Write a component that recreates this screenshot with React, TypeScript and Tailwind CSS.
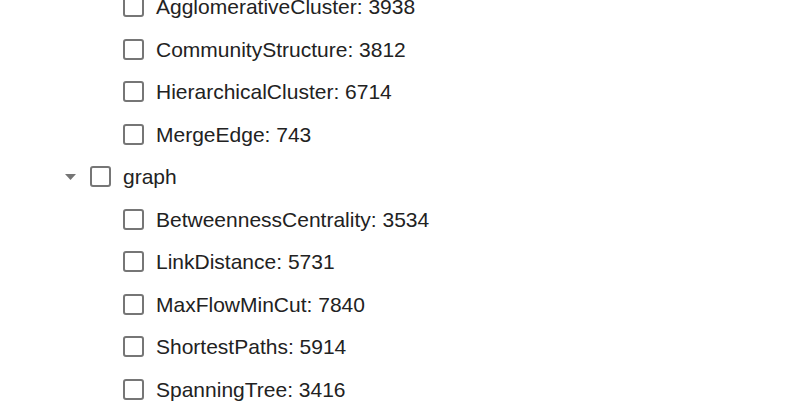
type Node = { label: string; count?: number; depth: number; open?: boolean };

const ROWS: Node[] = [
  { label: "AgglomerativeCluster", count: 3938, depth: 2 },
  { label: "CommunityStructure", count: 3812, depth: 2 },
  { label: "HierarchicalCluster", count: 6714, depth: 2 },
  { label: "MergeEdge", count: 743, depth: 2 },
  { label: "graph", depth: 1, open: true },
  { label: "BetweennessCentrality", count: 3534, depth: 2 },
  { label: "LinkDistance", count: 5731, depth: 2 },
  { label: "MaxFlowMinCut", count: 7840, depth: 2 },
  { label: "ShortestPaths", count: 5914, depth: 2 },
  { label: "SpanningTree", count: 3416, depth: 2 },
];

function Caret() {
  return (
    <svg width="11" height="6" viewBox="0 0 11 6">
      <path d="M0 0 L11 0 L5.5 6 Z" fill="#757575" />
    </svg>
  );
}

function Row({ node }: { node: Node }) {
  return (
    <div className="flex items-center h-[42.5px]">
      {/* indent + caret slot */}
      <div className={node.depth === 1 ? "w-[65px] shrink-0" : "w-[98px] shrink-0"} />
      <div className="w-[25px] shrink-0 flex items-center">
        {node.open && <Caret />}
      </div>
      <span className="w-[21px] h-[21px] shrink-0 rounded-[3px] border-2 border-[#767676] bg-white" />
      <span className="ml-3 text-[21px] leading-none text-[#222] whitespace-nowrap">
        {node.count === undefined ? node.label : `${node.label}: ${node.count}`}
      </span>
    </div>
  );
}

export default function App() {
  return (
    <div
      className="w-[800px] h-[420px] overflow-hidden bg-white"
      style={{ fontFamily: '"Liberation Sans", Arial, sans-serif' }}
    >
      <div className="-mt-[14.75px]">
        {ROWS.map((n) => (
          <Row key={n.label} node={n} />
        ))}
      </div>
    </div>
  );
}
